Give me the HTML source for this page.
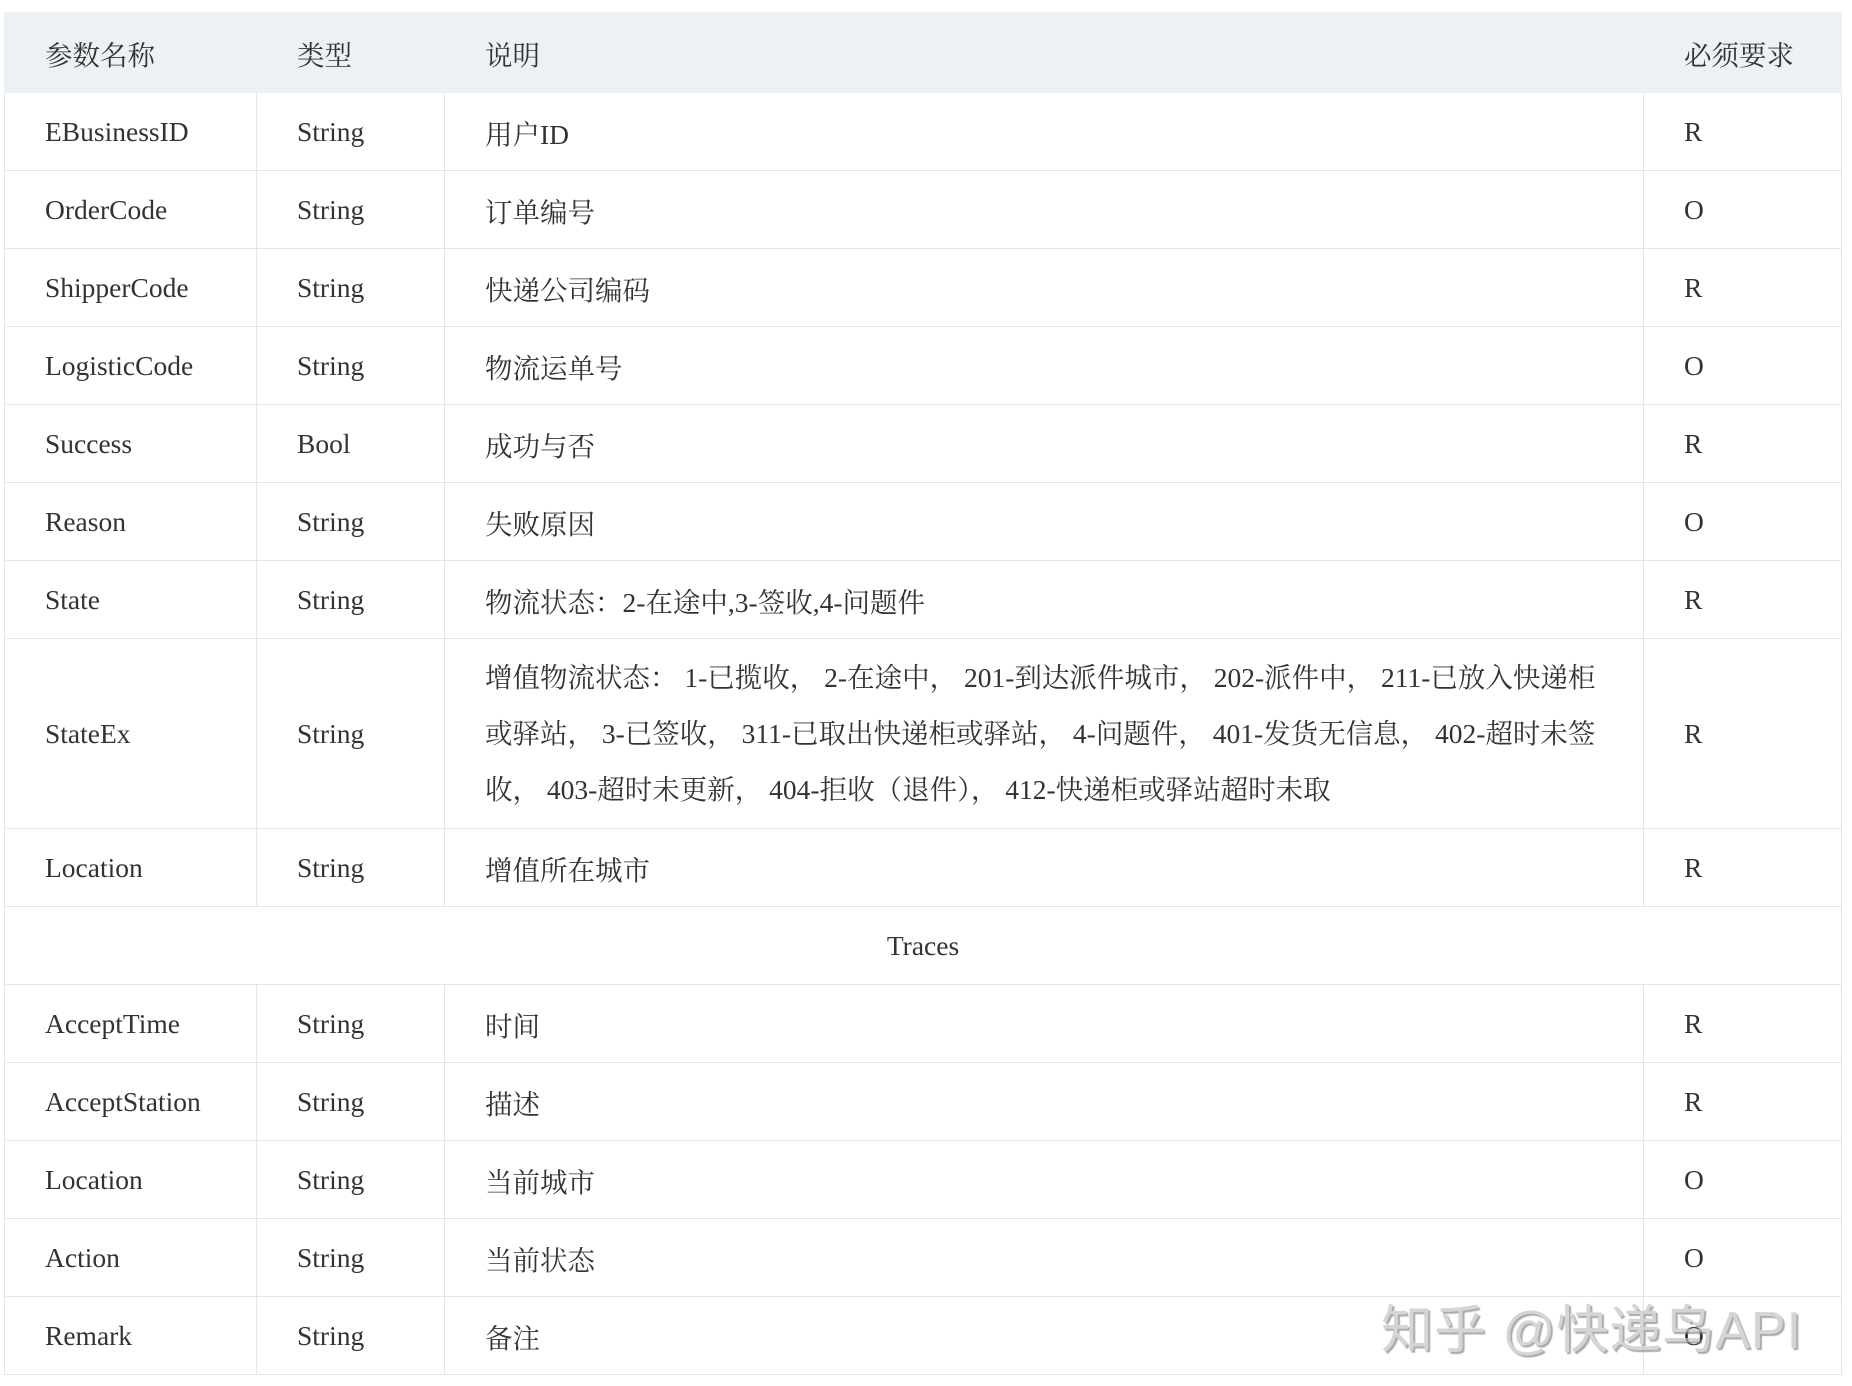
<!DOCTYPE html>
<html><head><meta charset="utf-8"><style>
body{margin:0;width:1852px;height:1386px;background:#fff;position:relative;overflow:hidden;font-family:"Liberation Serif","Noto Serif CJK SC",serif;color:#333;}
table{position:absolute;left:4px;top:12px;width:1838px;border-collapse:collapse;font-size:27.5px;table-layout:fixed;}
td,th{border:1.5px solid #e6e6e6;padding:0 0 0 40px;text-align:left;font-weight:normal;height:77px;}
th{background:#eef1f4;border-color:#eef1f4;height:79px;}
tr.h td{height:189px;line-height:56px;padding-right:26px;}
.c1{width:211px}.c2{width:147px}.c4{width:157px}
.w{position:absolute;left:1381px;top:1288px;font-family:"Liberation Sans","Noto Sans CJK SC",sans-serif;font-size:52px;color:#c4c4c4;text-shadow:2px 2px 1px #888;opacity:.7;letter-spacing:1px}
</style></head><body>
<table>
<tr><th class="c1">参数名称</th><th class="c2">类型</th><th>说明</th><th class="c4">必须要求</th></tr>
<tr><td>EBusinessID</td><td>String</td><td>用户ID</td><td>R</td></tr>
<tr><td>OrderCode</td><td>String</td><td>订单编号</td><td>O</td></tr>
<tr><td>ShipperCode</td><td>String</td><td>快递公司编码</td><td>R</td></tr>
<tr><td>LogisticCode</td><td>String</td><td>物流运单号</td><td>O</td></tr>
<tr><td>Success</td><td>Bool</td><td>成功与否</td><td>R</td></tr>
<tr><td>Reason</td><td>String</td><td>失败原因</td><td>O</td></tr>
<tr><td>State</td><td>String</td><td>物流状态：2-在途中,3-签收,4-问题件</td><td>R</td></tr>
<tr class="h"><td>StateEx</td><td>String</td><td>增值物流状态： 1-已揽收， 2-在途中， 201-到达派件城市， 202-派件中， 211-已放入快递柜或驿站， 3-已签收， 311-已取出快递柜或驿站， 4-问题件， 401-发货无信息， 402-超时未签收， 403-超时未更新， 404-拒收（退件）， 412-快递柜或驿站超时未取</td><td>R</td></tr>
<tr><td>Location</td><td>String</td><td>增值所在城市</td><td>R</td></tr>
<tr><td colspan="4" style="text-align:center;padding:0">Traces</td></tr>
<tr><td>AcceptTime</td><td>String</td><td>时间</td><td>R</td></tr>
<tr><td>AcceptStation</td><td>String</td><td>描述</td><td>R</td></tr>
<tr><td>Location</td><td>String</td><td>当前城市</td><td>O</td></tr>
<tr><td>Action</td><td>String</td><td>当前状态</td><td>O</td></tr>
<tr><td>Remark</td><td>String</td><td>备注</td><td>O</td></tr>
</table>
<div class="w">知乎 @快递鸟API</div>
</body></html>
